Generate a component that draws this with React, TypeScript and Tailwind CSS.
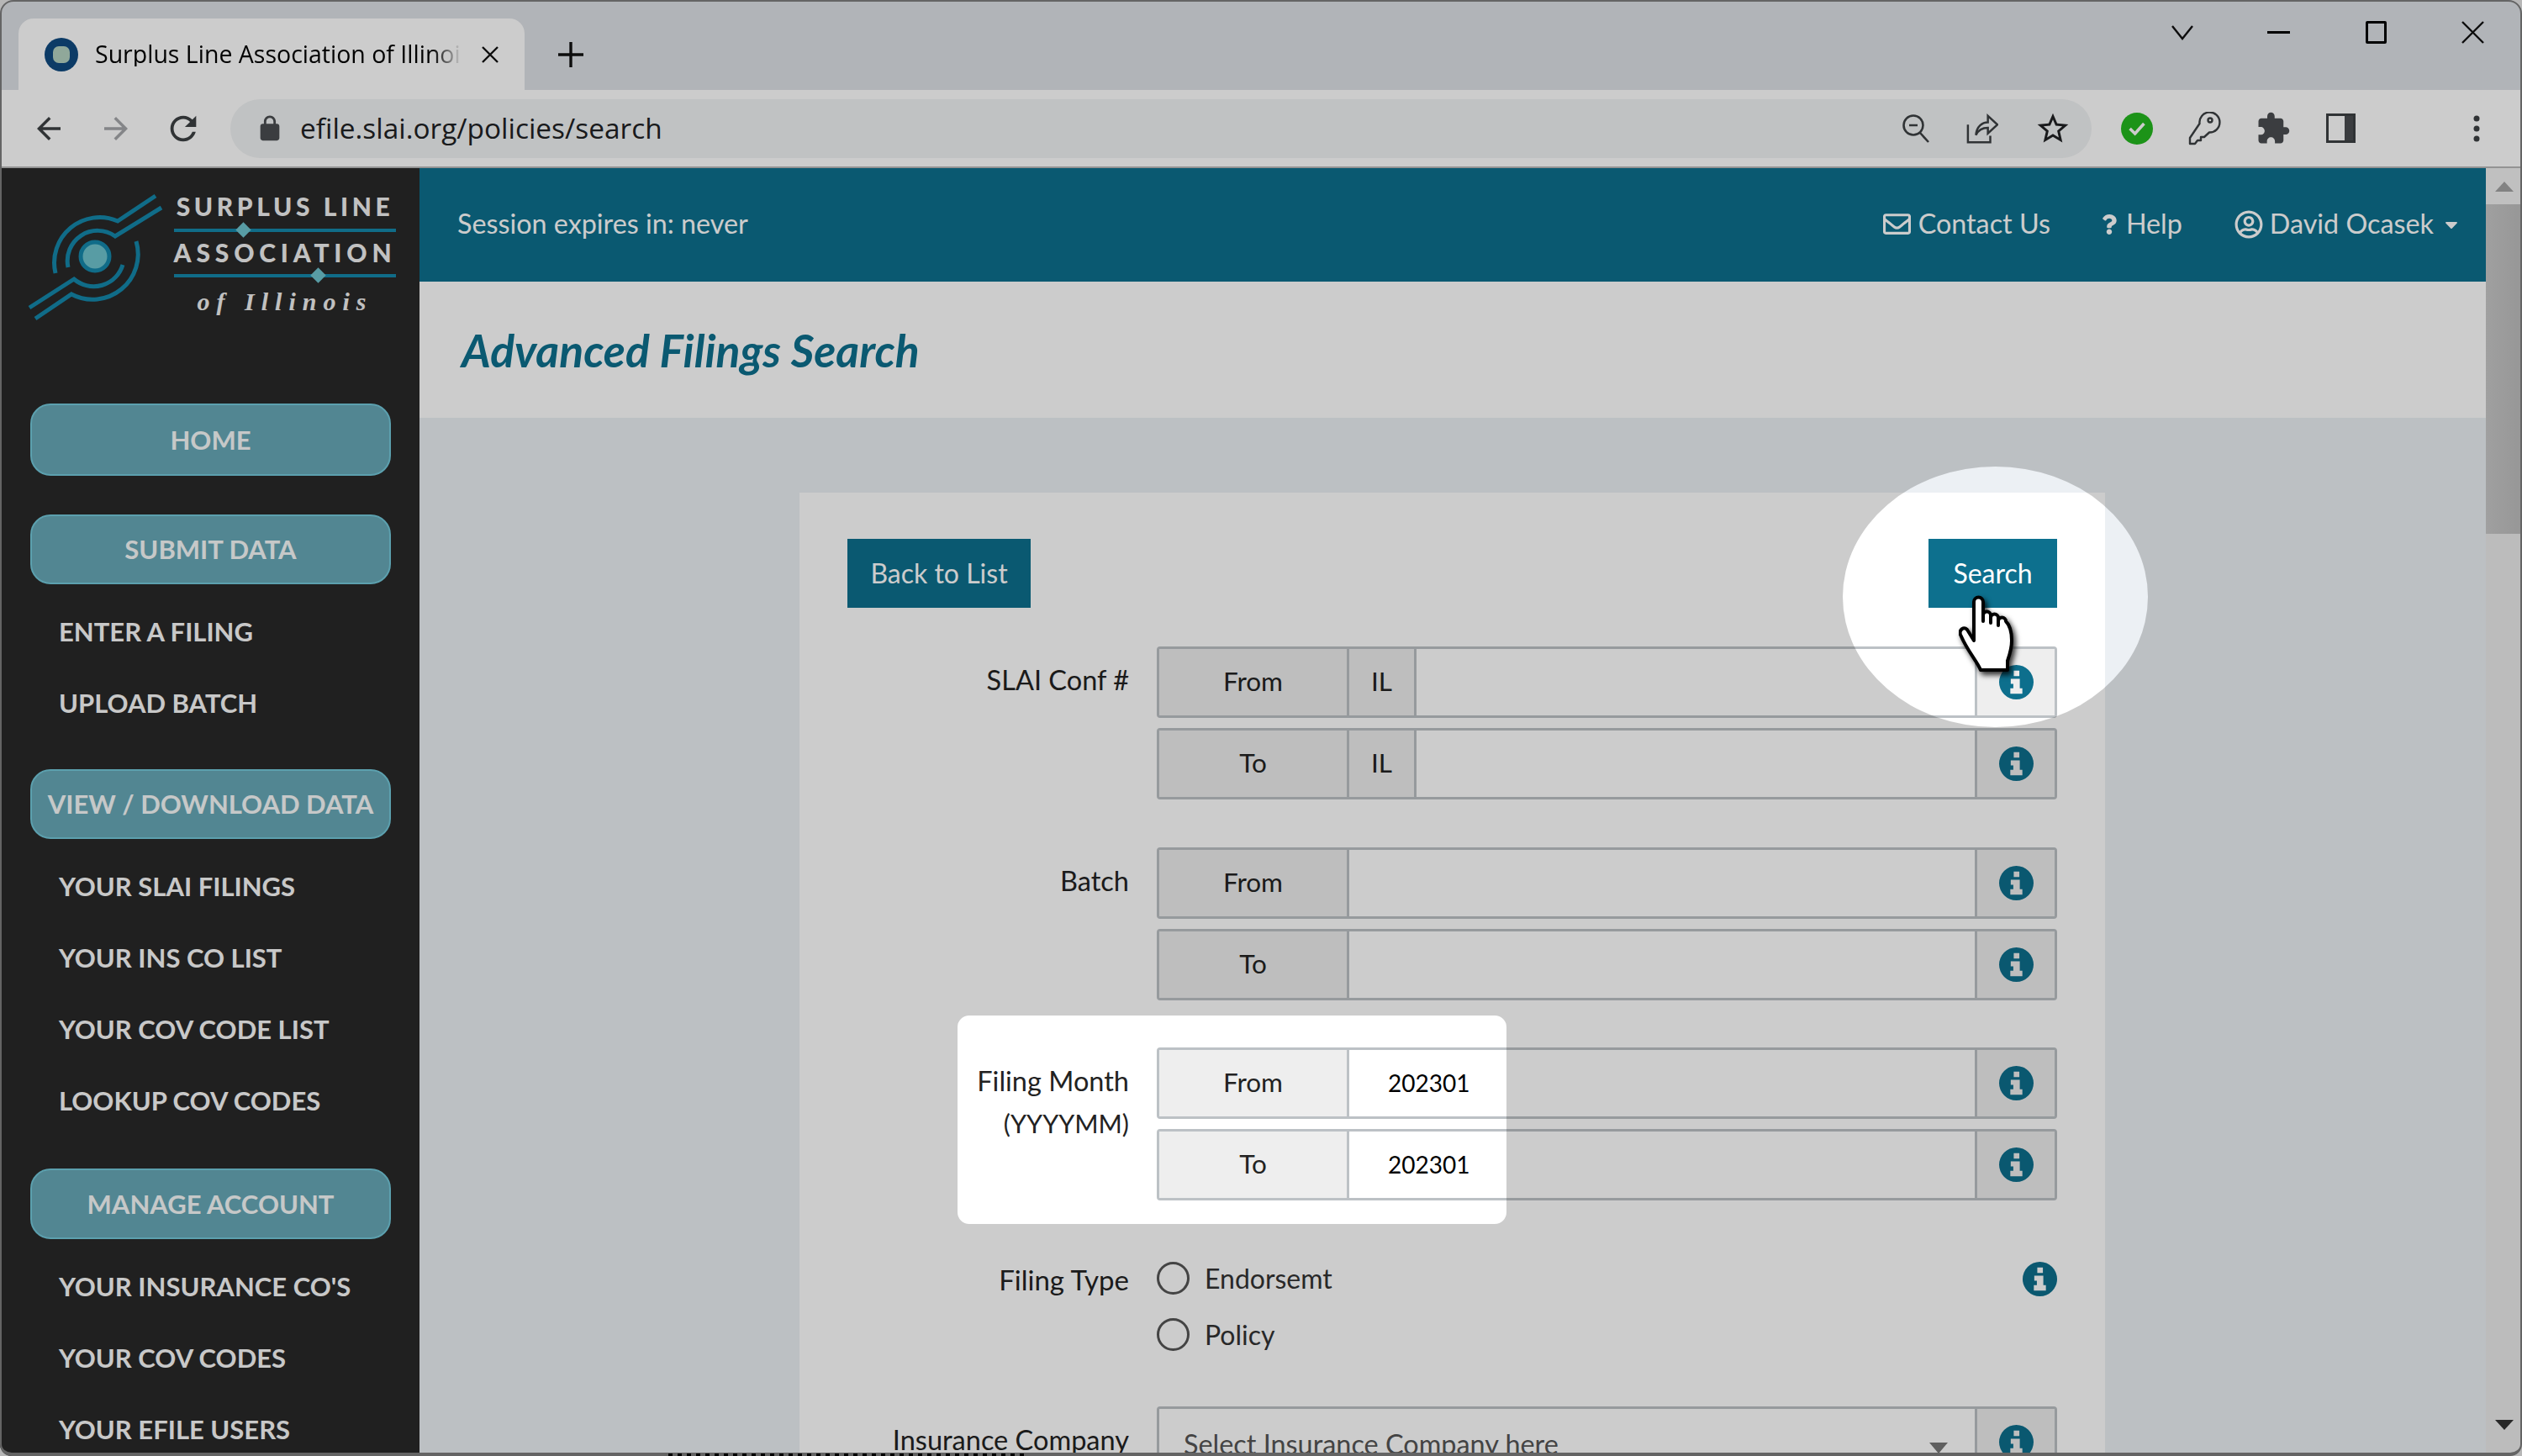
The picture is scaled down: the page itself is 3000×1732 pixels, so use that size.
import { FaCaretDown, FaQuestion, FaRegEnvelope, FaRegUserCircle } from "react-icons/fa";

const BODY = "font-['Lato',sans-serif]";

const BACK = "M20 11H7.83l5.59-5.59L12 4l-8 8 8 8 1.41-1.41L7.83 13H20v-2z";
const RELOAD =
  "M17.65 6.35C16.2 4.9 14.21 4 12 4c-4.42 0-7.99 3.58-7.99 8s3.57 8 7.99 8c3.73 0 6.84-2.55 7.73-6h-2.08c-.82 2.33-3.04 4-5.65 4-3.31 0-6-2.69-6-6s2.69-6 6-6c1.66 0 3.14.69 4.22 1.78L13 11h7V4l-2.35 2.35z";
const LOCK =
  "M18 8h-1V6c0-2.76-2.24-5-5-5S7 3.24 7 6v2H6c-1.1 0-2 .9-2 2v10c0 1.1.9 2 2 2h12c1.1 0 2-.9 2-2V10c0-1.1-.9-2-2-2zM9 6c0-1.66 1.34-3 3-3s3 1.34 3 3v2H9V6z";
const STAR =
  "M22 9.24l-7.19-.62L12 2 9.19 8.63 2 9.24l5.46 4.73L5.82 21 12 17.27 18.18 21l-1.63-7.03L22 9.24zM12 15.4l-3.76 2.27 1-4.28-3.32-2.88 4.38-.38L12 6.1l1.71 4.04 4.38.38-3.32 2.88 1 4.28L12 15.4z";
const PUZZLE =
  "M20.5 11H19V7c0-1.1-.9-2-2-2h-4V3.5C13 2.12 11.88 1 10.5 1S8 2.12 8 3.5V5H4c-1.1 0-1.99.9-1.99 2v3.8H3.5c1.49 0 2.7 1.21 2.7 2.7s-1.21 2.7-2.7 2.7H2V20c0 1.1.9 2 2 2h3.8v-1.5c0-1.49 1.21-2.7 2.7-2.7 1.49 0 2.7 1.21 2.7 2.7V22H17c1.1 0 2-.9 2-2v-4h1.5c1.38 0 2.5-1.12 2.5-2.5S21.88 11 20.5 11z";

function Glyph({ d, className }: { d: string; className: string }) {
  return (
    <svg viewBox="0 0 24 24" fill="currentColor" className={className}>
      <path d={d} />
    </svg>
  );
}

function TabStrip() {
  return (
    <div className="relative flex h-[107px] shrink-0 items-end bg-[#dee1e6] pl-[22px]">
      <div className="flex h-[85px] w-[602px] items-center rounded-t-[18px] bg-white pl-[31px]">
        <span className="flex size-[40px] items-center justify-center rounded-full bg-[#0f4a80]">
          <span className="size-[20px] rounded-[7px] bg-[#b5d3c1]" />
        </span>
        <span className="ml-[20px] w-[436px] overflow-hidden whitespace-nowrap font-['Open_Sans',sans-serif] text-[28.5px] leading-none text-black [mask-image:linear-gradient(to_right,black_92%,transparent)]">
          Surplus Line Association of Illinois
        </span>
        <svg viewBox="0 0 20 20" className="ml-[24px] size-[20px]" stroke="#111" strokeWidth="2.4">
          <path d="M1 1 19 19M19 1 1 19" />
        </svg>
      </div>
      <svg viewBox="0 0 32 32" className="mb-[26px] ml-[39px] size-[32px]" stroke="#111" strokeWidth="3.4">
        <path d="M16 1V31M1 16H31" />
      </svg>
      <div className="ml-auto flex items-center self-start pt-[25px] pr-[45px]">
        <svg viewBox="0 0 26 18" className="mr-[88px] h-[18px] w-[26px]" fill="none" stroke="#111" strokeWidth="2.4">
          <path d="M1 1 13 16 25 1" />
        </svg>
        <span className="mr-[90px] h-[3px] w-[27px] bg-black" />
        <span className="mr-[89px] h-[27px] w-[25px] rounded-[2px] border-[3px] border-black" />
        <svg viewBox="0 0 27 27" className="size-[27px]" stroke="#111" strokeWidth="2.4">
          <path d="M1 1 26 26M26 1 1 26" />
        </svg>
      </div>
    </div>
  );
}

function Toolbar() {
  return (
    <div className="flex h-[93px] shrink-0 items-center border-b-2 border-[#b8b8b8] bg-white pl-[37px]">
      <Glyph d={BACK} className="size-[42px] text-[#3c4043]" />
      <Glyph d={BACK} className="ml-[38px] size-[42px] rotate-180 text-[#a5a7aa]" />
      <Glyph d={RELOAD} className="ml-[36px] size-[46px] text-[#3c4043]" />
      <div className="ml-[33px] flex h-[70px] w-[2214px] items-center rounded-full bg-[#f1f3f4] pl-[30px]">
        <Glyph d={LOCK} className="size-[34px] text-[#4a4d50]" />
        <span className="ml-[19px] font-['Open_Sans',sans-serif] text-[33.4px] leading-none text-[#202124]">
          efile.slai.org/policies/search
        </span>
        <div className="ml-auto flex items-center gap-[43px] pr-[24px]">
          <svg viewBox="0 0 34 36" className="h-[36px] w-[34px]" fill="none" stroke="#3c4043" strokeWidth="2.6">
            <circle cx="14" cy="14" r="11.5" />
            <path d="M9 14H19M22 23 32 34" />
          </svg>
          <svg viewBox="0 0 40 38" className="size-[38px]" fill="none" stroke="#3c4043" strokeWidth="2.6">
            <path d="M2 14V36H30V28" />
            <path d="M12 27C13 16 20 11 27 11V3L39 14 27 25V18C20 18 15 21 12 27Z" />
          </svg>
          <Glyph d={STAR} className="size-[44px] text-[#202124]" />
        </div>
      </div>
      <span className="ml-[35px] flex size-[38px] items-center justify-center rounded-full bg-[#24b81e]">
        <svg viewBox="0 0 20 20" className="size-[24px]" fill="none" stroke="white" strokeWidth="3">
          <path d="M3 10 8 15 17 5" />
        </svg>
      </span>
      <svg viewBox="0 0 40 40" className="ml-[41px] size-[40px]" fill="none" stroke="#3c4043" strokeWidth="2.4" strokeLinejoin="round">
        <path d="M14.5 14A12 12 0 1 1 26 24.5L20 30H16V34H12L9 38H3V31Z" />
        <circle cx="27" cy="10" r="2.5" />
      </svg>
      <Glyph d={PUZZLE} className="ml-[41px] size-[42px] text-[#4a4d50]" />
      <span className="ml-[42px] flex h-[35px] w-[35px] justify-end border-[3px] border-[#3c4043]">
        <span className="h-full w-[10px] bg-[#4a4d50]" />
      </span>
      <svg viewBox="0 0 8 32" className="ml-[140px] h-[32px] w-[8px]" fill="#3c4043">
        <circle cx="4" cy="4" r="3.5" />
        <circle cx="4" cy="16" r="3.5" />
        <circle cx="4" cy="28" r="3.5" />
      </svg>
    </div>
  );
}

function LogoMark() {
  return (
    <div className="relative h-[160px] w-[470px]">
      <svg viewBox="0 0 170 160" className="absolute top-0 left-[30px] h-[160px] w-[170px]" fill="none" stroke="#1487ab" strokeWidth="5">
        <circle cx="83" cy="80" r="17" fill="#6ec4cd" strokeWidth="5" />
        <path d="M36 100A54 54 0 0 1 110 38L155 8" />
        <path d="M51 93A36 36 0 0 1 107 56L162 22" />
        <path d="M132 62A54 54 0 0 1 55 125L12 154" />
        <path d="M116 90A36 36 0 0 1 58 107L5 141" />
      </svg>
      <div className="absolute top-[3px] left-[207px] flex w-[264px] flex-col items-center font-['Lato',sans-serif] font-black text-[#f2f2f2]">
        <span className="text-[30px] leading-[34px] tracking-[4.6px] whitespace-nowrap">SURPLUS LINE</span>
        <span className="relative mt-[10px] h-[4px] w-full bg-[#1487ab]">
          <span className="absolute -top-[5px] left-[76px] size-[13px] rotate-45 bg-[#6ec4cd]" />
        </span>
        <span className="mt-[7px] text-[30px] leading-[34px] tracking-[5.8px] whitespace-nowrap">ASSOCIATION</span>
        <span className="relative mt-[9px] h-[4px] w-full bg-[#1487ab]">
          <span className="absolute -top-[5px] left-[165px] size-[13px] rotate-45 bg-[#6ec4cd]" />
        </span>
        <span className="mt-[13px] font-['Liberation_Serif',serif] text-[30px] leading-[32px] font-bold tracking-[8px] italic">of Illinois</span>
      </div>
    </div>
  );
}

function NavButton({ label, className }: { label: string; className: string }) {
  return (
    <div
      className={`mx-[36px] flex w-[429px] shrink-0 items-center justify-center rounded-[24px] border-2 border-[#73c8da] bg-[#67a8b7] text-[31px] font-bold whitespace-nowrap text-[#f8fbfb] ${className}`}
    >
      {label}
    </div>
  );
}

function NavLink({ label }: { label: string }) {
  return <div className="flex h-[85px] items-center pl-[70px] text-[31px] font-bold whitespace-nowrap text-[#fbfbfb]">{label}</div>;
}

function Sidebar() {
  return (
    <aside className={`flex w-[499px] shrink-0 flex-col bg-[#282828] ${BODY}`}>
      <div className="shrink-0 pt-[25px]">
        <LogoMark />
      </div>
      <NavButton label="HOME" className="mt-[95px] h-[86px]" />
      <NavButton label="SUBMIT DATA" className="mt-[46px] h-[83px]" />
      <div className="mt-[14px] shrink-0">
        <NavLink label="ENTER A FILING" />
        <NavLink label="UPLOAD BATCH" />
      </div>
      <NavButton label="VIEW / DOWNLOAD DATA" className="mt-[36px] h-[83px]" />
      <div className="mt-[14px] shrink-0">
        <NavLink label="YOUR SLAI FILINGS" />
        <NavLink label="YOUR INS CO LIST" />
        <NavLink label="YOUR COV CODE LIST" />
        <NavLink label="LOOKUP COV CODES" />
      </div>
      <NavButton label="MANAGE ACCOUNT" className="mt-[38px] h-[84px]" />
      <div className="mt-[14px] shrink-0">
        <NavLink label="YOUR INSURANCE CO'S" />
        <NavLink label="YOUR COV CODES" />
        <NavLink label="YOUR EFILE USERS" />
      </div>
    </aside>
  );
}

function TopBar() {
  return (
    <header className="flex h-[135px] shrink-0 items-center bg-[#0d708e] pr-[29px] pb-[2px] pl-[45px] text-[32.3px] text-white">
      <span>Session expires in: never</span>
      <div className="ml-auto flex items-center">
        <FaRegEnvelope className="size-[33px]" />
        <span className="ml-[9px]">Contact Us</span>
        <FaQuestion className="ml-[58px] size-[24px]" />
        <span className="ml-[8px]">Help</span>
        <FaRegUserCircle className="ml-[62px] size-[34px]" />
        <span className="ml-[8px]">David Ocasek</span>
        <FaCaretDown className="ml-[9px] size-[24px]" />
      </div>
    </header>
  );
}

function InfoIcon({ className = "" }: { className?: string }) {
  return (
    <svg viewBox="0 0 40 40" className={`size-[41px] shrink-0 text-[#0d6f8d] ${className}`}>
      <path
        fill="currentColor"
        fillRule="evenodd"
        d="M20 0A20 20 0 1 1 20 40A20 20 0 1 1 20 0Z M17 6.5H23.5V13H17Z M13.5 16H24V27H27V33.5H13V27H16.5V22H13.5Z"
      />
    </svg>
  );
}

function InputRow({ label, il, value }: { label: string; il?: boolean; value?: string }) {
  return (
    <div className="flex h-[85px] w-[1071px] overflow-hidden rounded-[4px] border-[3px] border-[#bcc1c5] text-[31.5px] text-[#222]">
      <div className="flex w-[226px] shrink-0 items-center justify-center border-r-[3px] border-[#bcc1c5] bg-[#eeeeee] pb-[2px]">{label}</div>
      {il && (
        <div className="flex w-[80px] shrink-0 items-center justify-center border-r-[3px] border-[#bcc1c5] bg-[#eeeeee] pb-[2px]">IL</div>
      )}
      <div className="flex flex-1 items-center bg-white pb-[2px] pl-[46px] text-[28px] text-black">{value}</div>
      <div className="flex w-[95px] shrink-0 items-center justify-center border-l-[3px] border-[#bcc1c5] bg-[#eeeeee]">
        <InfoIcon />
      </div>
    </div>
  );
}

function FieldGroup({
  label,
  il,
  value,
  className = "",
}: {
  label: React.ReactNode;
  il?: boolean;
  value?: string;
  className?: string;
}) {
  return (
    <div className={`flex ${className}`}>
      <div className="w-[335px] shrink-0 pt-[15px] text-right text-[32.5px] leading-[50px] text-[#222]">{label}</div>
      <div className="ml-[33px] flex flex-col gap-[12px]">
        <InputRow label="From" il={il} value={value} />
        <InputRow label="To" il={il} value={value} />
      </div>
    </div>
  );
}

function Radio({ label }: { label: string }) {
  return (
    <div className="flex h-[39px] items-center">
      <span className="size-[39px] rounded-full border-[3px] border-[#555] bg-white" />
      <span className="ml-[18px] text-[32px] text-[#333]">{label}</span>
    </div>
  );
}

function Form() {
  return (
    <section className="mt-[89px] ml-[452px] h-[1200px] w-[1553px] shrink-0 bg-white px-[57px] pt-[55px]">
      <div className="flex items-center justify-between text-[32px] text-white">
        <button className="flex h-[82px] w-[218px] items-center justify-center bg-[#0d708e]">Back to List</button>
        <button className="flex h-[82px] w-[153px] items-center justify-center bg-[#0d708e]">Search</button>
      </div>
      <FieldGroup label="SLAI Conf #" il className="mt-[46px]" />
      <FieldGroup label="Batch" className="mt-[57px]" />
      <FieldGroup
        label={
          <>
            Filing Month
            <br />
            <span className="text-[30.5px]">(YYYYMM)</span>
          </>
        }
        value="202301"
        className="mt-[56px]"
      />
      <div className="mt-[73px] flex items-start">
        <div className="w-[335px] shrink-0 text-right text-[33px] leading-[42px] text-[#222]">Filing Type</div>
        <div className="ml-[33px] flex flex-col gap-[28px]">
          <Radio label="Endorsemt" />
          <Radio label="Policy" />
        </div>
        <InfoIcon className="ml-auto" />
      </div>
      <div className="mt-[66px] flex">
        <div className="w-[335px] shrink-0 pt-[15px] text-right text-[32.5px] leading-[50px] text-[#222]">Insurance Company</div>
        <div className="ml-[33px] flex h-[85px] w-[1071px] overflow-hidden rounded-[4px] border-[3px] border-[#bcc1c5] text-[32.4px]">
          <div className="flex flex-1 items-center bg-white pt-[6px] pr-[32px] pl-[29px] text-[#555]">
            Select Insurance Company here
            <span className="mt-[8px] ml-auto h-0 w-0 border-x-[11px] border-t-[13px] border-x-transparent border-t-[#777]" />
          </div>
          <div className="flex w-[95px] shrink-0 items-center justify-center border-l-[3px] border-[#bcc1c5] bg-[#eeeeee]">
            <InfoIcon />
          </div>
        </div>
      </div>
    </section>
  );
}

function Scrollbar() {
  return (
    <div className="flex w-[43px] shrink-0 flex-col bg-[#ebebeb]">
      <div className="flex h-[43px] shrink-0 items-center justify-center bg-[#f1f1f1]">
        <span className="h-0 w-0 border-x-[11px] border-b-[12px] border-x-transparent border-b-[#a3a3a3]" />
      </div>
      <div className="h-[392px] w-full bg-linear-to-r from-[#c8c8c8] to-[#bdbdbd]" />
      <div className="mt-auto flex h-[43px] shrink-0 items-start justify-center">
        <span className="h-0 w-0 border-x-[11px] border-t-[12px] border-x-transparent border-t-[#333]" />
      </div>
    </div>
  );
}

// the dim layer over the whole window, with the two highlighted spots cut out
function Dimmer() {
  return (
    <svg viewBox="0 0 3000 1732" className="pointer-events-none absolute inset-0 h-[1732px] w-[3000px]">
      <path
        fillRule="evenodd"
        fill="black"
        fillOpacity="0.2"
        d="M0 0H3000V1732H0Z M2192 710A181.5 155 0 1 0 2555 710A181.5 155 0 1 0 2192 710Z M1153 1208H1778A14 14 0 0 1 1792 1222V1442A14 14 0 0 1 1778 1456H1153A14 14 0 0 1 1139 1442V1222A14 14 0 0 1 1153 1208Z"
      />
    </svg>
  );
}

function HandCursor() {
  return (
    <svg
      viewBox="0 0 66 92"
      className="absolute top-[708px] left-[2330px] h-[92px] w-[66px] drop-shadow-[3px_4px_3px_rgba(0,0,0,0.8)]"
      fill="white"
      stroke="black"
      strokeWidth="4"
      strokeLinejoin="round"
    >
      <path d="M18 8A5.5 5.5 0 0 1 29 8V31V24A4.5 4.5 0 0 1 38 24V33V27A4.5 4.5 0 0 1 47 27V36V31A4.5 4.5 0 0 1 56 31C61 36 63 44 63 54C63 64 60 72 58 78V89H26C22 79 10 66 2 47C0 41 6 37 10 41L18 54Z" />
    </svg>
  );
}

export default function App() {
  return (
    <div className={`relative h-[1732px] w-[3000px] overflow-hidden bg-[#e5e5e5] ${BODY}`}>
      <div className="flex h-full flex-col overflow-hidden rounded-t-[16px] rounded-b-[14px] bg-white">
        <TabStrip />
        <Toolbar />
        <div className="flex min-h-0 flex-1">
          <Sidebar />
          <main className="flex min-w-0 flex-1 flex-col overflow-hidden bg-[#ecf0f4]">
            <TopBar />
            <div className="flex h-[162px] shrink-0 items-center bg-white pl-[50px] text-[53.5px] font-bold text-[#0d708e] italic">
              Advanced Filings Search
            </div>
            <Form />
          </main>
          <Scrollbar />
        </div>
      </div>
      {/* window edge and the sliver of what sits below the window */}
      <div className="pointer-events-none absolute inset-0 rounded-t-[16px] rounded-b-[14px] border-2 border-b-4 border-[#7d7d7d]" />
      <div className="absolute bottom-0 left-[795px] h-[3px] w-[425px] bg-[repeating-linear-gradient(90deg,#000_0_5px,transparent_5px_11px)]" />
      <Dimmer />
      <HandCursor />
    </div>
  );
}
